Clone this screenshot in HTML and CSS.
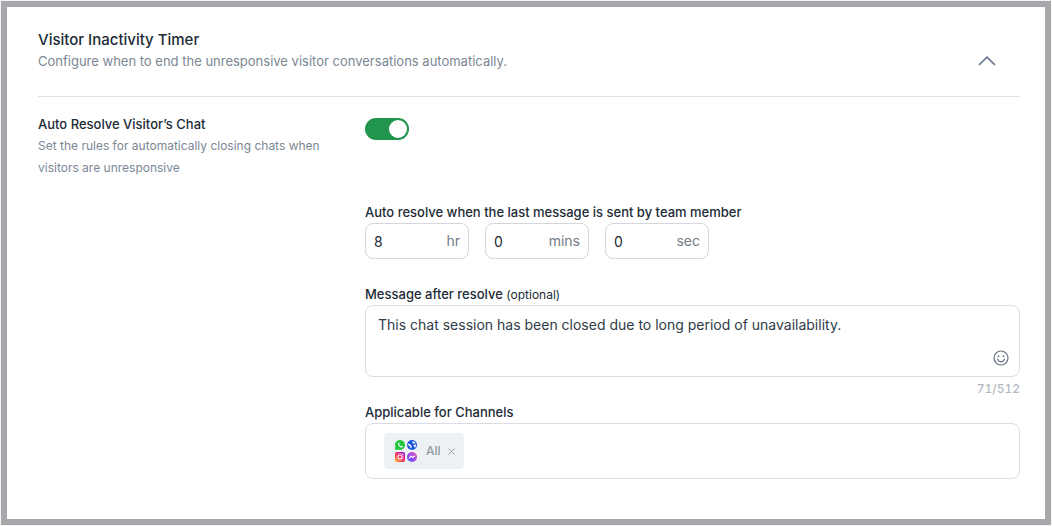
FILE: index.html
```html
<!DOCTYPE html>
<html lang="en">
<head>
	<meta charset="utf-8">
	<meta name="viewport" content="width=device-width, initial-scale=1">
	<title>Visitor Inactivity Timer</title>
	<link rel="stylesheet" href="styles.css">
</head>
<body>
	<main class="panel">
		<header class="panel-header">
			<div>
				<h1 class="title">Visitor Inactivity Timer</h1>
				<p class="subtitle">Configure when to end the unresponsive visitor conversations automatically.</p>
			</div>
			<button class="collapse" type="button" aria-label="Collapse">
				<svg width="18" height="10" viewBox="0 0 18 10" fill="none" stroke="#64748b" stroke-width="1.6"><path d="M1 9L9 1.2L17 9"/></svg>
			</button>
		</header>

		<div class="setting">
			<div class="intro">
				<h2 class="label"><label for="autoResolve">Auto Resolve Visitor’s Chat</label></h2>
				<p class="hint">Set the rules for automatically closing chats when visitors are unresponsive</p>
			</div>

			<form class="fields">
				<input class="switch" type="checkbox" role="switch" id="autoResolve" checked>

				<fieldset class="timer">
					<legend class="label">Auto resolve when the last message is sent by team member</legend>
					<div class="times">
						<div class="time">
							<input type="text" id="hr" value="8">
							<label for="hr">hr</label>
						</div>
						<div class="time">
							<input type="text" id="mins" value="0">
							<label for="mins">mins</label>
						</div>
						<div class="time">
							<input type="text" id="sec" value="0">
							<label for="sec">sec</label>
						</div>
					</div>
				</fieldset>

				<div class="message">
					<label class="label" for="message">Message after resolve <span class="optional">(optional)</span></label>
					<div class="message-box">
						<textarea id="message">This chat session has been closed due to long period of unavailability.</textarea>
						<button class="emoji" type="button" aria-label="Insert emoji">
							<svg width="16" height="16" viewBox="0 0 16 16" fill="none" stroke="#64707f" stroke-width="1.2">
								<circle cx="8" cy="8" r="7"/>
								<path d="M4.600 9.200c.5 1.700 1.800 2.600 3.400 2.600s2.900-.9 3.400-2.600" stroke-linecap="round"/>
								<circle cx="5.500" cy="6.200" r=".9" fill="#64707f" stroke="none"/>
								<circle cx="10.500" cy="6.200" r=".9" fill="#64707f" stroke="none"/>
							</svg>
						</button>
					</div>
					<div class="count">71/512</div>
				</div>

				<div class="channels">
					<div class="label" id="channelsLabel">Applicable for Channels</div>
					<div class="channels-box" role="group" aria-labelledby="channelsLabel">
						<span class="tag">
							<svg class="tag-icon" width="22" height="22" viewBox="0 0 22 22">
								<defs>
									<linearGradient id="insta" x1="0" y1="1" x2="1" y2="0">
										<stop offset="0" stop-color="#ffc32b"/>
										<stop offset=".35" stop-color="#fb3b35"/>
										<stop offset=".65" stop-color="#e31a91"/>
										<stop offset="1" stop-color="#7b24e8"/>
									</linearGradient>
									<linearGradient id="messenger" x1="0" y1="1" x2="1" y2="0">
										<stop offset="0" stop-color="#3a6cff"/>
										<stop offset=".5" stop-color="#a043f5"/>
										<stop offset="1" stop-color="#f55a9b"/>
									</linearGradient>
								</defs>
								<circle cx="5" cy="5" r="5" fill="#25c73c"/>
								<path d="M0 10L.5 6.500L3.500 9.700Z" fill="#25c73c"/>
								<path d="M3.400 2.700c-1.300 1.200.9 4.900 3.200 4.800.9-.1 1.300-.9 1-1.300L6.400 5.500l-.7.700C4.900 5.800 4.400 5.200 4.100 4.500l.5-.6-.5-1.200Z" fill="#fff"/>
								<circle cx="17" cy="5" r="5" fill="#1552d8"/>
								<path d="M12.500 3.200c1.200-.3 1.600.7 2.800 1 .8.300.5 1.100 1.200 1.700.6.700.2 1.700-.4 2.600-.8-.2-.8-1.300-1.300-2-.7-.8-2-1.200-2.300-3.300ZM17 1.200c1.500-.3 2.900.5 3.700 1.500l-1.500 1-1.500-.3ZM18.200 5.100l2.800-.8c.4 1.600-.2 2.900-1.100 3.700Z" fill="#dce9ff"/>
								<rect y="12" width="10" height="10" rx="2" fill="url(#insta)"/>
								<rect x="1.500" y="13.500" width="7" height="7" rx="2" fill="none" stroke="#fff" stroke-width=".5" opacity=".6"/>
								<circle cx="5" cy="17" r="2" fill="none" stroke="#fff" stroke-width="1.100"/>
								<circle cx="7.500" cy="14.500" r=".6" fill="#fff"/>
								<circle cx="17" cy="17" r="5" fill="url(#messenger)"/>
								<path d="M14 18.500l1.900-2.500 1.800 1.500 2.300-1.800" fill="none" stroke="#fff" stroke-width="1.200"/>
							</svg>
							<span>All</span>
							<button class="remove" type="button" aria-label="Remove All">
								<svg width="7" height="7" viewBox="0 0 7 7" stroke="#98a2ad" stroke-width="1"><path d="M.5 .5L6.500 6.500M6.500 .5L.5 6.500"/></svg>
							</button>
						</span>
					</div>
				</div>
			</form>
		</div>
	</main>
</body>
</html>
```
FILE: styles.css
```css
* {
	box-sizing: border-box;
}
body {
	margin: 0;
	padding: 1px;
	background-color: #f4f4f4;
	font-family: Inter, "Liberation Sans", sans-serif;
	font-size: 14px;
	line-height: 20px;
	color: #212b36;
}
h1, h2, p {
	margin: 0;
}
button {
	display: flex;
	padding: 0;
	border: 0;
	background: none;
	cursor: pointer;
}
input, textarea {
	margin: 0;
	font: inherit;
	color: inherit;
}

.panel {
	min-height: calc(100vh - 2px);
	padding: 22px 25px 40px 31px;
	border: 6px solid #a7a8ab;
	background-color: #fff;
}

.panel-header {
	display: flex;
	align-items: flex-end;
	justify-content: space-between;
	padding-bottom: 25px;
	border-bottom: 1px solid #e1e2e4;
}

.title {
	font-size: 15px;
	font-weight: 500;
	line-height: 22px;
}

.subtitle {
	font-size: 13px;
	color: #7b8794;
}

.collapse {
	margin-right: 24px;
	margin-bottom: 5px;
}

.setting {
	display: grid;
	grid-template-columns: 287px 1fr;
	column-gap: 40px;
	padding-top: 17px;
}

.label {
	display: block;
	padding: 0;
	font-size: 13px;
	font-weight: 500;
	line-height: 21px;
}

.hint {
	font-size: 12px;
	line-height: 22px;
	color: #7b8794;
}

.fields {
	padding-top: 4px;
}

.switch {
	display: flex;
	align-items: center;
	justify-content: flex-end;
	width: 44px;
	height: 22px;
	padding: 2px;
	border-radius: 11px;
	background-color: #21944e;
	appearance: none;
	cursor: pointer;
}

.switch::before {
	content: '';
	width: 18px;
	height: 18px;
	border-radius: 50%;
	background-color: #fff;
}

.switch:not(:checked) {
	justify-content: flex-start;
	background-color: #c4cbd3;
}

.timer {
	min-width: 0;
	margin: 62px 0 0;
	padding: 0;
	border: 0;
}

.times {
	display: flex;
	gap: 16px;
}

.time {
	display: flex;
	align-items: center;
	width: 104px;
	height: 36px;
	padding: 0 8px;
	border: 1px solid #d3d6dc;
	border-radius: 8px;
}

.time input {
	flex: 1;
	min-width: 0;
	padding: 1px 0 0;
	border: 0;
	background: none;
	outline: 0;
}

.time label {
	color: #747b86;
}

.message {
	margin-top: 25px;
}

.optional {
	font-size: 12px;
	font-weight: 400;
}

.message-box {
	position: relative;
	height: 72px;
	border: 1px solid #dadce8;
	border-radius: 8px;
}

.message-box textarea {
	display: block;
	width: 100%;
	height: 100%;
	padding: 9px 40px 9px 12px;
	border: 0;
	background: none;
	outline: 0;
	resize: none;
	color: #2f3b48;
}

.emoji {
	position: absolute;
	right: 10px;
	bottom: 10px;
}

.count {
	padding-top: 2px;
	font-size: 12px;
	font-weight: 500;
	font-variant-numeric: tabular-nums;
	text-align: right;
	color: #b3b9c0;
}

.channels {
	margin-top: 3px;
}

.channels-box {
	min-height: 56px;
	padding: 9px 18px;
	border: 1px solid #dadce8;
	border-radius: 8px;
}

.tag {
	display: inline-flex;
	align-items: center;
	height: 36px;
	padding: 0 9px 0 11px;
	border-radius: 4px;
	background-color: #edf1f4;
	font-size: 12px;
	font-weight: 500;
	color: #8e99a4;
}

.tag-icon {
	margin-right: 9px;
}

.remove {
	margin-left: 7px;
}
```
